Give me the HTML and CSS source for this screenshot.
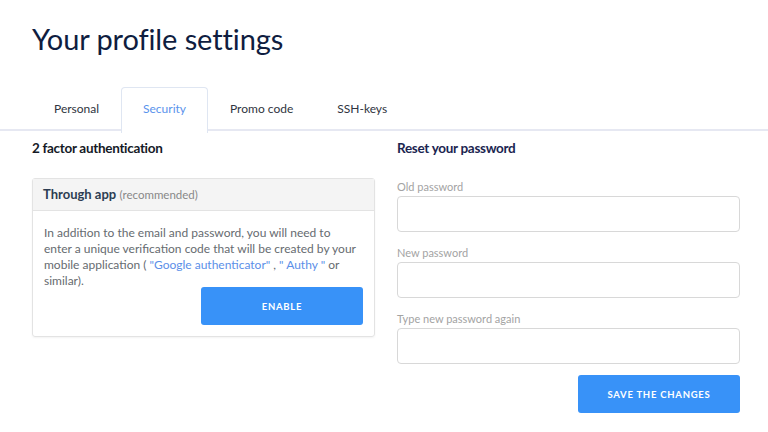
FILE: index.html
```html
<!DOCTYPE html>
<html>
<head>
<meta charset="utf-8">
<link rel="stylesheet" href="styles.css">
</head>
<body>
<div class="page">
  <h1 class="title">Your profile settings</h1>
  <nav class="tabs">
    <div class="tab">Personal</div>
    <div class="tab active">Security</div>
    <div class="tab">Promo code</div>
    <div class="tab">SSH-keys</div>
  </nav>
  <div class="content">
    <section class="col">
      <h2 class="section-title dark">2 factor authentication</h2>
      <div class="card">
        <div class="card-head"><b>Through app</b> <span class="muted">(recommended)</span></div>
        <div class="card-body">
          <p class="desc">In addition to the email and password, you will need to<br>enter a unique verification code that will be created by your<br>mobile application ( <a class="link">"Google authenticator"</a> , <a class="link">" Authy "</a> or<br>similar).</p>
          <div class="actions"><button class="btn enable">ENABLE</button></div>
        </div>
      </div>
    </section>
    <section class="col">
      <h2 class="section-title">Reset your password</h2>
      <div class="form">
        <label class="field"><span class="label">Old password</span><input class="input" type="password"></label>
        <label class="field"><span class="label">New password</span><input class="input" type="password"></label>
        <label class="field"><span class="label">Type new password again</span><input class="input" type="password"></label>
        <div class="actions"><button class="btn save">SAVE THE CHANGES</button></div>
      </div>
    </section>
  </div>
</div>
</body>
</html>
```
FILE: styles.css
```css
* { box-sizing: border-box; }
html, body { margin: 0; padding: 0; background: #fff; }
body { font-family: Lato, "Noto Sans", sans-serif; color: #333; }
.page { width: 768px; }
.title {
  margin: 0;
  padding: 21px 0 0 32px;
  height: 87px;
  font-size: 29px;
  font-weight: 400;
  color: #0f1d40;
  letter-spacing: -0.1px;
}
.tabs {
  display: flex;
  padding-left: 32px;
  border-bottom: 2px solid #e6e8f2;
  height: 44px;
}
.tab {
  padding: 0 21px;
  height: 44px;
  line-height: 41px;
  font-size: 12px;
  color: #2f3440;
  border: 1px solid transparent;
  border-bottom: none;
  border-radius: 4px 4px 0 0;
}
.tab.active {
  color: #5a93ec;
  border-color: #dfe6f2;
  background: #fff;
  margin-bottom: -2px;
  height: 46px;
}
.content {
  display: flex;
  gap: 22px;
  padding: 0 28px 0 32px;
}
.col { flex: 1; }
.section-title {
  margin: 0;
  padding-top: 9px;
  height: 47px;
  font-size: 13.5px;
  font-weight: 700;
  color: #1b2550;
  letter-spacing: -0.3px;
}
.section-title.dark { color: #151a26; }
.card {
  border: 1px solid #e3e3e3;
  border-radius: 3px;
  box-shadow: 0 1px 2px rgba(0,0,0,0.05);
}
.card-head {
  background: #f4f4f4;
  height: 32px;
  line-height: 31px;
  padding: 0 10px;
  border-bottom: 1px solid #e3e3e3;
  font-size: 13px;
  color: #2c3d52;
}
.card-head b { font-weight: 700; }
.card-head .muted { font-size: 11.5px; color: #888; }
.card-body { padding: 14px 11px 11px 11px; }
.desc {
  margin: 0;
  font-size: 12px;
  line-height: 16px;
  color: #666b70;
  white-space: nowrap;
}
.link { color: #5b8fe8; }
.actions { display: flex; justify-content: flex-end; }
.btn {
  border: none;
  background: #3892f8;
  color: #fff;
  font-family: Lato, sans-serif;
  font-weight: 700;
  font-size: 9.5px;
  letter-spacing: 0.75px;
  border-radius: 3px;
  width: 162px;
  height: 38px;
}
.enable { margin-top: -2px; }
.form { display: flex; flex-direction: column; padding-top: 1px; }
.field { display: flex; flex-direction: column; }
.label {
  font-size: 11px;
  color: #a3a3a3;
  height: 17px;
  line-height: 16px;
}
.input {
  height: 36px;
  border: 1px solid #d8d8d8;
  border-radius: 4px;
  margin: 0 0 13px 0;
  padding: 0 10px;
}
.save { margin-top: -2px; }
```
